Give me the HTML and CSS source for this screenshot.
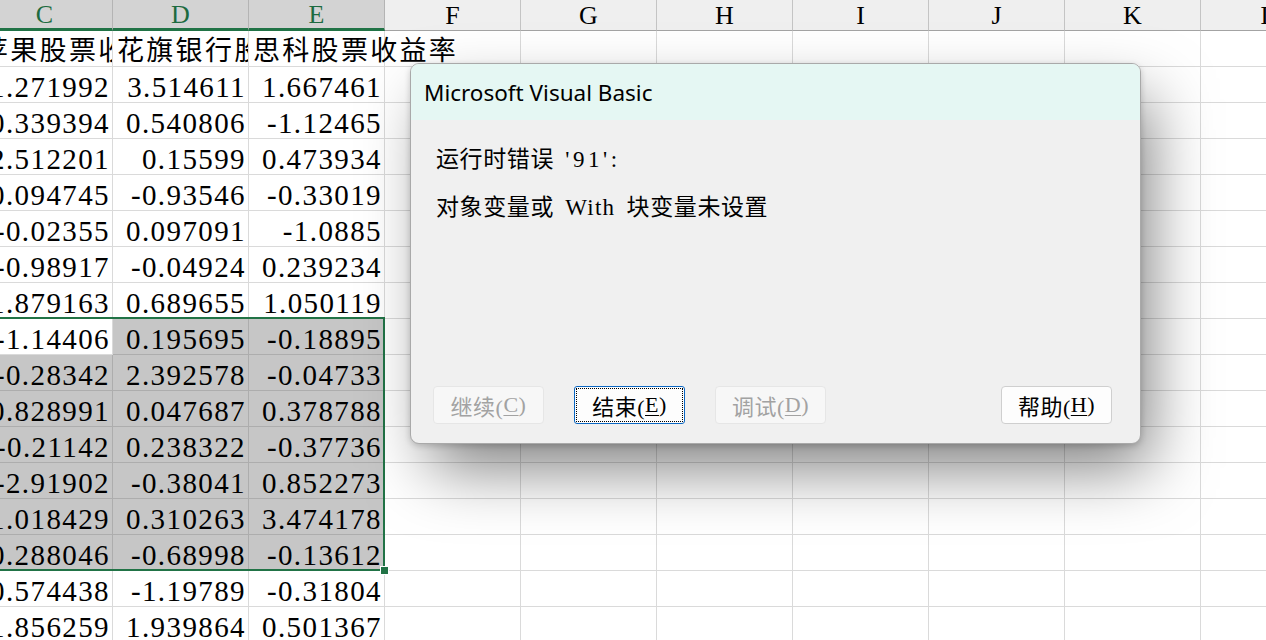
FILE: index.html
```html
<!DOCTYPE html>
<html lang="zh-CN">
<head>
<meta charset="utf-8">
<title>Excel VBA</title>
<link rel="stylesheet" href="styles.css">
</head>
<body>
<div class="sheet">
  <div class="grid">
    <div class="hd sel">C</div><div class="hd sel">D</div><div class="hd sel">E</div><div class="hd">F</div><div class="hd">G</div><div class="hd">H</div><div class="hd">I</div><div class="hd">J</div><div class="hd">K</div><div class="hd">L</div>

    <div class="c t">苹果股票收益率</div><div class="c t">花旗银行股票收益率</div><div class="c t over">思科股票收益率</div><div class="c"></div><div class="c"></div><div class="c"></div><div class="c"></div><div class="c"></div><div class="c"></div><div class="c"></div>

    <div class="c n">1.271992</div><div class="c n">3.514611</div><div class="c n">1.667461</div><div class="c"></div><div class="c"></div><div class="c"></div><div class="c"></div><div class="c"></div><div class="c"></div><div class="c"></div>
    <div class="c n">0.339394</div><div class="c n">0.540806</div><div class="c n">-1.12465</div><div class="c"></div><div class="c"></div><div class="c"></div><div class="c"></div><div class="c"></div><div class="c"></div><div class="c"></div>
    <div class="c n">2.512201</div><div class="c n">0.15599</div><div class="c n">0.473934</div><div class="c"></div><div class="c"></div><div class="c"></div><div class="c"></div><div class="c"></div><div class="c"></div><div class="c"></div>
    <div class="c n">0.094745</div><div class="c n">-0.93546</div><div class="c n">-0.33019</div><div class="c"></div><div class="c"></div><div class="c"></div><div class="c"></div><div class="c"></div><div class="c"></div><div class="c"></div>
    <div class="c n">-0.02355</div><div class="c n">0.097091</div><div class="c n">-1.0885</div><div class="c"></div><div class="c"></div><div class="c"></div><div class="c"></div><div class="c"></div><div class="c"></div><div class="c"></div>
    <div class="c n">-0.98917</div><div class="c n">-0.04924</div><div class="c n">0.239234</div><div class="c"></div><div class="c"></div><div class="c"></div><div class="c"></div><div class="c"></div><div class="c"></div><div class="c"></div>
    <div class="c n">1.879163</div><div class="c n">0.689655</div><div class="c n">1.050119</div><div class="c"></div><div class="c"></div><div class="c"></div><div class="c"></div><div class="c"></div><div class="c"></div><div class="c"></div>
    <div class="c n">-1.14406</div><div class="c n s">0.195695</div><div class="c n s">-0.18895</div><div class="c"></div><div class="c"></div><div class="c"></div><div class="c"></div><div class="c"></div><div class="c"></div><div class="c"></div>
    <div class="c n s">-0.28342</div><div class="c n s">2.392578</div><div class="c n s">-0.04733</div><div class="c"></div><div class="c"></div><div class="c"></div><div class="c"></div><div class="c"></div><div class="c"></div><div class="c"></div>
    <div class="c n s">0.828991</div><div class="c n s">0.047687</div><div class="c n s">0.378788</div><div class="c"></div><div class="c"></div><div class="c"></div><div class="c"></div><div class="c"></div><div class="c"></div><div class="c"></div>
    <div class="c n s">-0.21142</div><div class="c n s">0.238322</div><div class="c n s">-0.37736</div><div class="c"></div><div class="c"></div><div class="c"></div><div class="c"></div><div class="c"></div><div class="c"></div><div class="c"></div>
    <div class="c n s">-2.91902</div><div class="c n s">-0.38041</div><div class="c n s">0.852273</div><div class="c"></div><div class="c"></div><div class="c"></div><div class="c"></div><div class="c"></div><div class="c"></div><div class="c"></div>
    <div class="c n s">1.018429</div><div class="c n s">0.310263</div><div class="c n s">3.474178</div><div class="c"></div><div class="c"></div><div class="c"></div><div class="c"></div><div class="c"></div><div class="c"></div><div class="c"></div>
    <div class="c n s">0.288046</div><div class="c n s">-0.68998</div><div class="c n s">-0.13612</div><div class="c"></div><div class="c"></div><div class="c"></div><div class="c"></div><div class="c"></div><div class="c"></div><div class="c"></div>
    <div class="c n">0.574438</div><div class="c n">-1.19789</div><div class="c n">-0.31804</div><div class="c"></div><div class="c"></div><div class="c"></div><div class="c"></div><div class="c"></div><div class="c"></div><div class="c"></div>
    <div class="c n">1.856259</div><div class="c n">1.939864</div><div class="c n">0.501367</div><div class="c"></div><div class="c"></div><div class="c"></div><div class="c"></div><div class="c"></div><div class="c"></div><div class="c"></div>
  </div>

  <div class="sel-border"></div>
  <div class="fill-handle"></div>

  <div class="dialog">
    <div class="dlg-title">Microsoft Visual Basic</div>
    <div class="dlg-body">
      <p class="msg">运行时错误 <span class="ascii">'91':</span></p>
      <p class="msg">对象变量或 <span class="ascii-word">With</span> 块变量未设置</p>
    </div>
    <div class="dlg-buttons">
      <div class="btn-group">
        <button class="btn disabled">继续(<u>C</u>)</button>
        <button class="btn focused"><span class="focus-ring">结束(<u>E</u>)</span></button>
        <button class="btn disabled">调试(<u>D</u>)</button>
      </div>
      <button class="btn">帮助(<u>H</u>)</button>
    </div>
  </div>
</div>
</body>
</html>
```

FILE: styles.css
```css
html, body {
  margin: 0;
  padding: 0;
  background: #ffffff;
  overflow: hidden;
}

.sheet {
  position: relative;
  width: 1266px;
  height: 640px;
  overflow: hidden;
}

.grid {
  display: grid;
  grid-template-columns: repeat(10, 136px);
  grid-template-rows: 31px;
  grid-auto-rows: 36px;
  margin-left: -23px;
  width: 1360px;
}

.hd {
  box-sizing: border-box;
  background: #efefef;
  border-right: 1px solid #c4c4c4;
  border-bottom: 1px solid #a3a3a3;
  font-family: "Liberation Serif", serif;
  font-size: 26px;
  line-height: 31px;
  text-align: center;
  color: #000;
}

.hd.sel {
  background: #d3d3d3;
  color: #1d6b40;
  border-right-color: #b4b4b4;
  border-bottom: 3px solid #217346;
  line-height: 29px;
}

.c {
  box-sizing: border-box;
  border-right: 1px solid #dadada;
  border-bottom: 1px solid #dadada;
  overflow: hidden;
  white-space: nowrap;
  color: #000;
}

.c.t {
  font-family: "Noto Sans CJK SC", sans-serif;
  font-size: 27px;
  line-height: 36px;
  padding-left: 4px;
  letter-spacing: 2.3px;
}

.c.t.over {
  overflow: visible;
}

.c.n {
  font-family: "Liberation Serif", serif;
  font-size: 29px;
  letter-spacing: 1.4px;
  line-height: 35px;
  padding-top: 3px;
  text-align: right;
  padding-right: 2px;
  direction: rtl;
  unicode-bidi: plaintext;
}

.c.s {
  background: #c6c6c6;
  border-right-color: #adadad;
  border-bottom-color: #adadad;
}

.sel-border {
  position: absolute;
  left: -30px;
  top: 317px;
  width: 411px;
  height: 250px;
  border: 2px solid #217346;
  pointer-events: none;
}

.fill-handle {
  position: absolute;
  left: 380px;
  top: 566px;
  width: 7px;
  height: 7px;
  background: #217346;
  border: 1px solid #ffffff;
}

.dialog {
  position: absolute;
  left: 410px;
  top: 63px;
  width: 729px;
  height: 379px;
  background: #f0f0f0;
  border: 1px solid #a9a9a9;
  border-radius: 9px;
  overflow: hidden;
  box-shadow: 14px 30px 64px -6px rgba(0, 0, 0, 0.5), 0 2px 6px rgba(0, 0, 0, 0.18);
  display: flex;
  flex-direction: column;
}

.dlg-title {
  height: 56px;
  background: #e5f7f3;
  font-family: "Noto Sans", "Open Sans", sans-serif;
  font-size: 22.5px;
  line-height: 58px;
  padding-left: 13px;
  color: #000;
}

.dlg-body {
  padding: 23px 0 0 25px;
  flex: 1;
}

.msg {
  margin: 0 0 14px 0;
  font-family: "Liberation Serif", "Noto Sans CJK SC", serif;
  font-size: 23px;
  line-height: 34px;
  color: #000;
  letter-spacing: 0.6px;
  word-spacing: 5px;
}

.ascii {
  letter-spacing: 3.5px;
}

.ascii-word {
  letter-spacing: 1.2px;
}

.dlg-buttons {
  display: flex;
  justify-content: space-between;
  padding: 0 28px 19px 22px;
}

.btn-group {
  display: flex;
  gap: 30px;
}

.btn {
  box-sizing: border-box;
  width: 111px;
  height: 38px;
  padding: 0;
  border: 1px solid #cfcfcf;
  border-radius: 4px;
  background: #fdfdfd;
  font-family: "Liberation Serif", "Noto Sans CJK SC", serif;
  font-size: 22px;
  color: #000;
  display: flex;
  align-items: center;
  justify-content: center;
  letter-spacing: 0.5px;
}

.btn u {
  text-decoration-thickness: 1px;
  text-underline-offset: 3px;
}

.btn.disabled {
  background: #f7f7f7;
  border-color: #e6e6e6;
  color: #a2a2a2;
}

.btn.focused {
  border: 1px solid #0a66c2;
  border-radius: 3px;
  padding: 1px;
}

.focus-ring {
  box-sizing: border-box;
  width: 100%;
  height: 100%;
  border: 1px dotted #000;
  display: flex;
  align-items: center;
  justify-content: center;
}
```
